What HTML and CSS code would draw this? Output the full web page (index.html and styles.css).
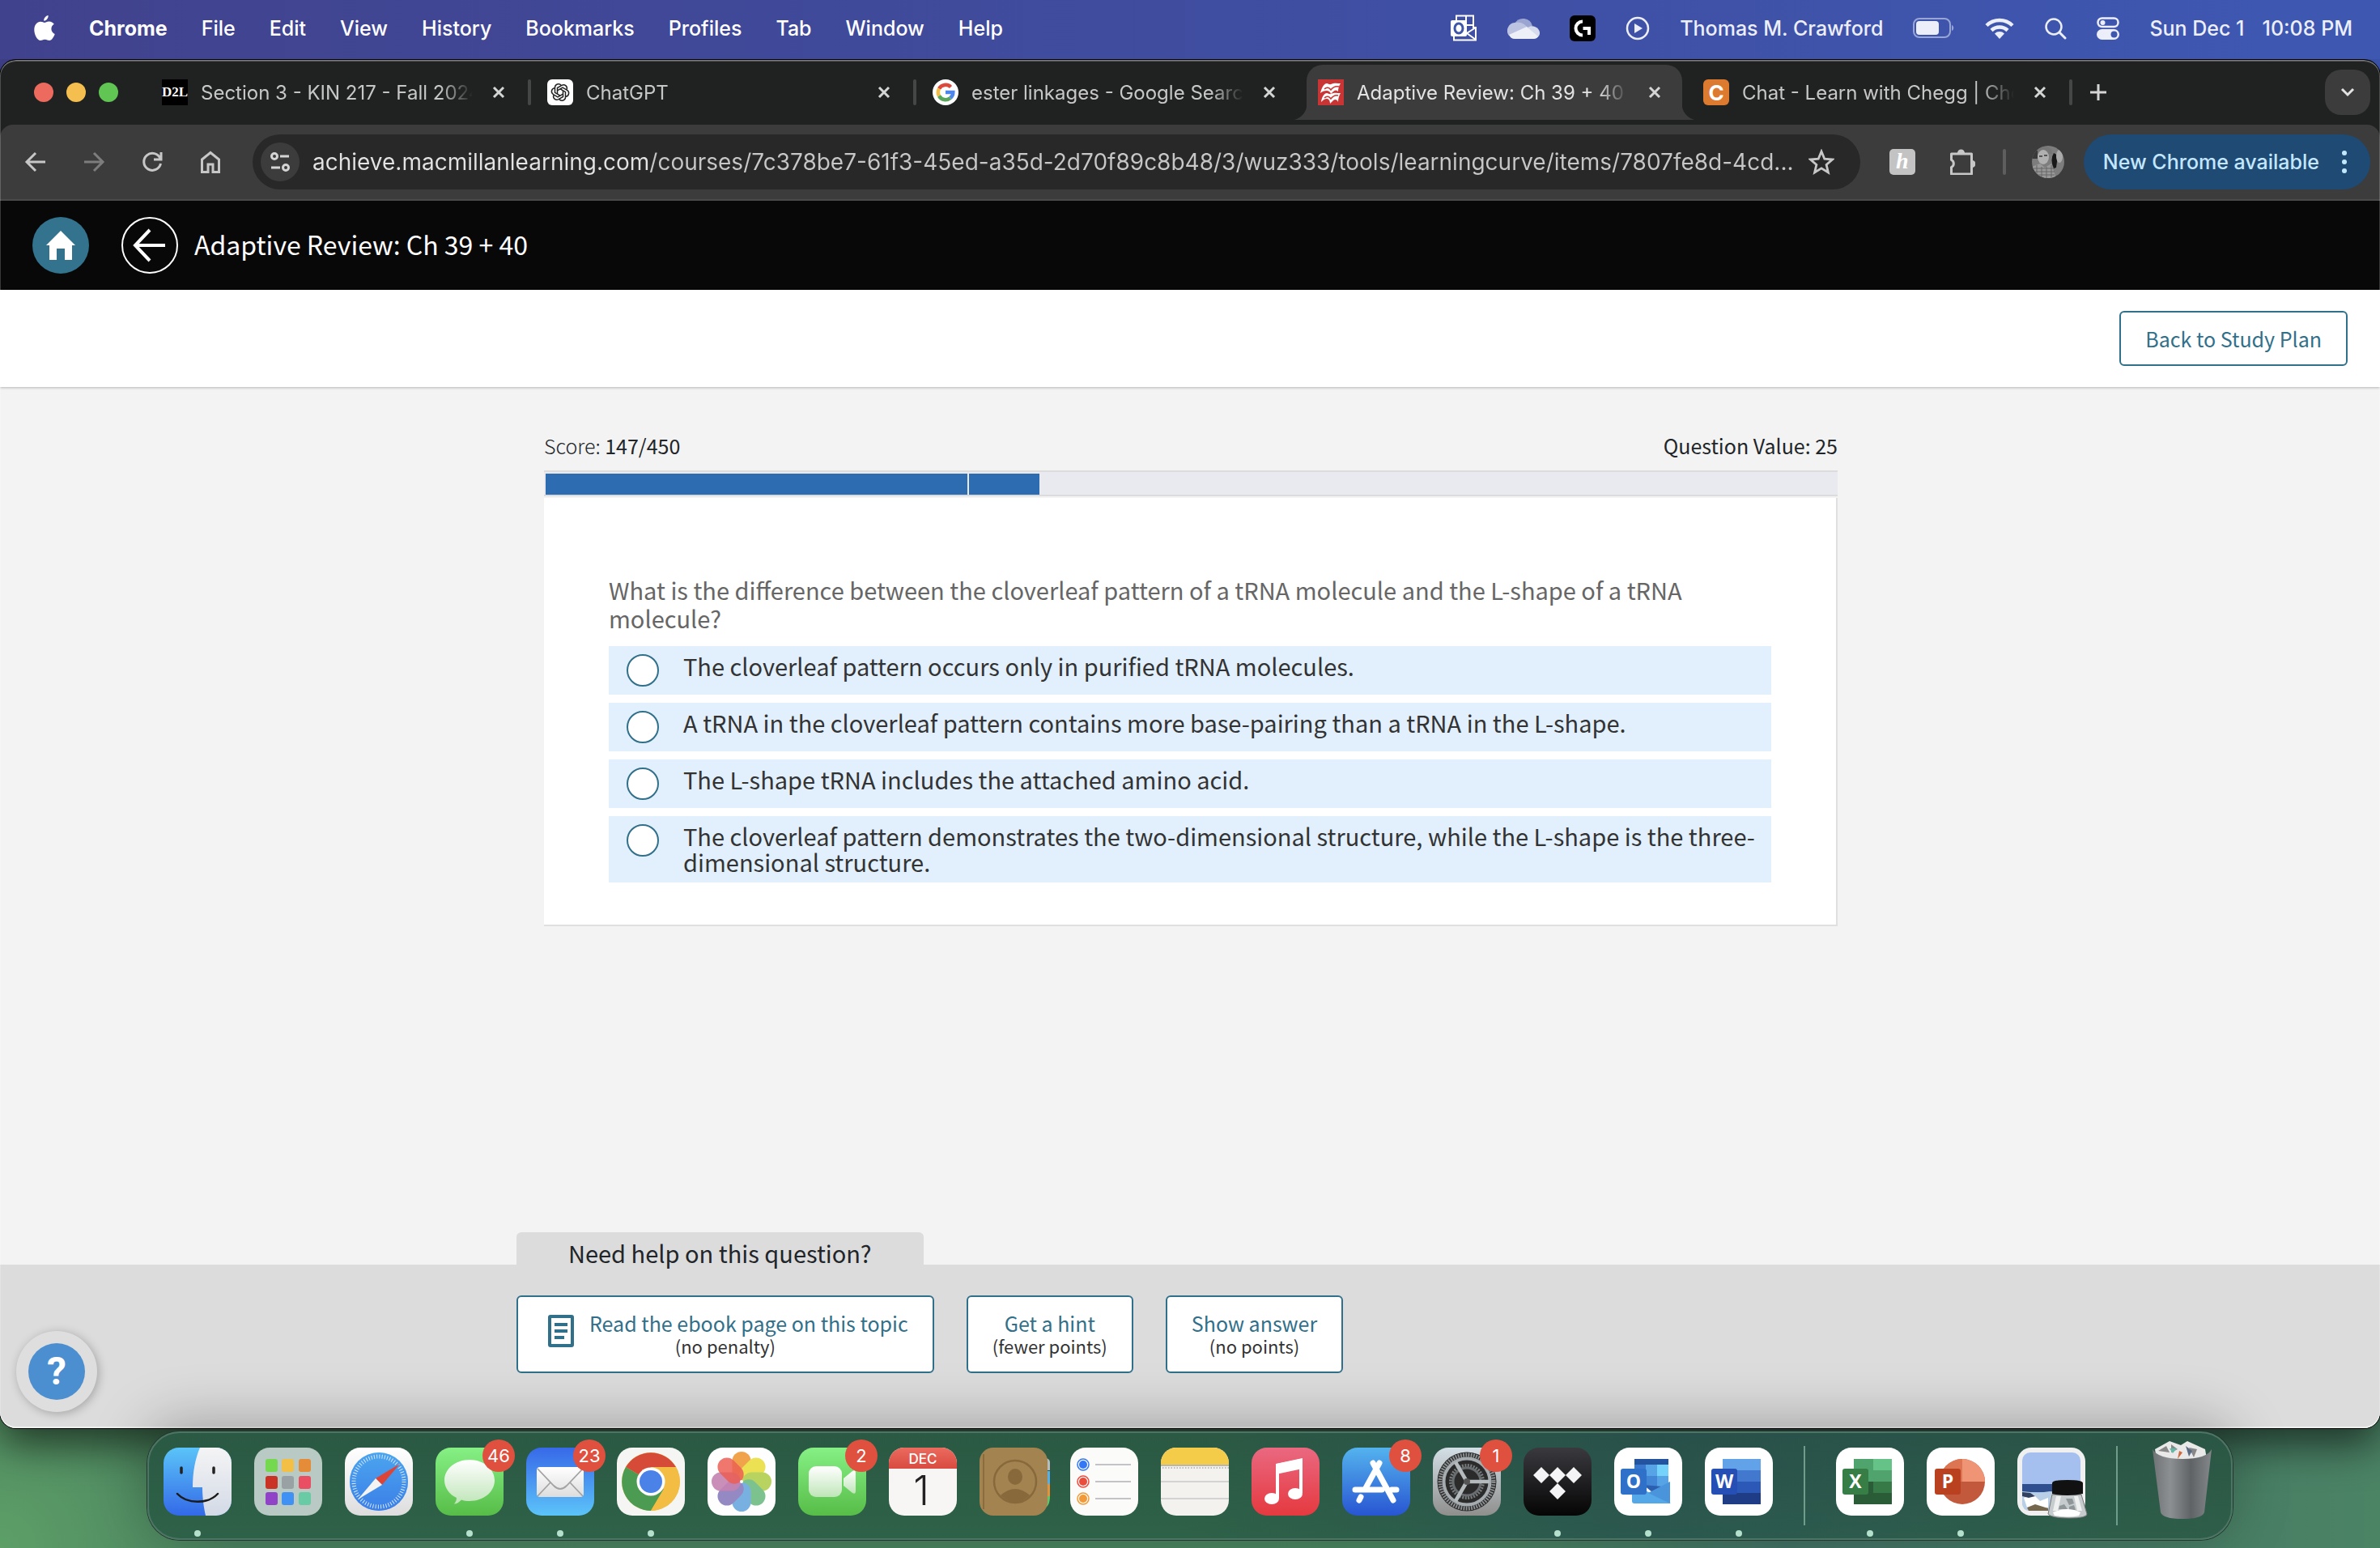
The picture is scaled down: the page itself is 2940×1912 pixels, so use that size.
FILE: index.html
```html
<!DOCTYPE html>
<html lang="en">
<head>
    <meta charset="UTF-8">
    <meta name="viewport" content="width=device-width, initial-scale=1.0">
    <title>Adaptive Review: Ch 39 + 40</title>
    <link rel="stylesheet" href="styles.css">
</head>
<body>
    <header class="menubar">
        <nav class="menus">
            <svg class="apple" width="26" height="32" viewBox="0 0 26 32"><path fill="#fff" d="M17.6 0c.3 3.400-2.200 6.600-5.400 6.800C11.800 3.600 14.600.500 17.600 0zM13 9c1.300 0 2.800-1.400 5.600-1.400 2.600 0 4.800 1.300 6.200 3.200-5 3-4.200 10 .900 12.200C24.500 26.600 22 31 19 31c-2.200 0-2.900-1.300-5.600-1.300S9.900 31 7.900 31C4.200 31 .300 23.800.300 18c0-6.500 3.900-10.200 7.700-10.200C10.300 7.800 11.800 9 13 9z"/></svg>
            <button class="app-name">Chrome</button>
            <button>File</button>
            <button>Edit</button>
            <button>View</button>
            <button>History</button>
            <button>Bookmarks</button>
            <button>Profiles</button>
            <button>Tab</button>
            <button>Window</button>
            <button>Help</button>
        </nav>
        <div class="status">
            <svg width="34" height="34" viewBox="0 0 34 34"><path d="M8 7V1.500h21V16h3v15.500H5V27" fill="none" stroke="#fff" stroke-width="2"/><path d="M20 2v11h9M32 16l-11 7 11 8" fill="none" stroke="#fff" stroke-width="2"/><rect x="1" y="7" width="20" height="20" rx="2" fill="#fff"/><ellipse cx="11" cy="17" rx="5" ry="6" fill="none" stroke="#3e55a8" stroke-width="3"/></svg>
            <svg width="40" height="26" viewBox="0 0 40 26"><path d="M9 7a12 12 0 0 1 22 3L20 16z" fill="#9aa5d1"/><path d="M9 6a10 10 0 0 0-7 16L25 12C22 8 16 4 9 6z" fill="#bcc4e2"/><path d="M25 12c8-5 16 2 15 8-1 4-4 5-6 5z" fill="#d5daed"/><path d="M2 21l22-10 14 12c-1 2-3 3-5 3H9c-3 0-6-2-7-5z" fill="#eef0f8"/></svg>
            <svg width="32" height="32" viewBox="0 0 32 32"><rect width="32" height="32" rx="6" fill="#000"/><path d="M16 7.500a8.500 8.500 0 0 0 0 17" fill="none" stroke="#fff" stroke-width="4"/><path d="M16.500 16H24v8" fill="none" stroke="#fff" stroke-width="4"/></svg>
            <svg width="30" height="30" viewBox="0 0 30 30"><circle cx="15" cy="15" r="13" fill="none" stroke="#eceffa" stroke-width="2.500"/><path d="M11 9l10 6-10 6z" fill="#eceffa"/></svg>
            <span class="user">Thomas M. Crawford</span>
            <svg width="52" height="26" viewBox="0 0 52 26"><rect x="1" y="1" width="45" height="23" rx="7" fill="none" stroke="#98a5d5" stroke-width="2"/><rect x="4" y="4" width="28" height="17" rx="4" fill="#eceffa"/><path d="M48 9c3 1 3 6 0 7z" fill="#98a5d5"/></svg>
            <svg width="36" height="26" viewBox="0 0 36 26"><g fill="none" stroke="#eceffa" stroke-width="4.500"><path d="M2 9.500a23 23 0 0 1 32 0"/><path d="M8 15.500a14.500 14.500 0 0 1 20 0"/></g><path d="M18 26l-6-6.500a8.500 8.500 0 0 1 12 0z" fill="#eceffa"/></svg>
            <svg width="28" height="28" viewBox="0 0 28 28"><circle cx="12" cy="12" r="9.500" fill="none" stroke="#eceffa" stroke-width="2.500"/><path d="M19 19l7 7" stroke="#eceffa" stroke-width="3" stroke-linecap="round"/></svg>
            <svg width="28" height="28" viewBox="0 0 28 28"><rect x="1.500" y="1.500" width="25" height="10.500" rx="5" fill="none" stroke="#eceffa" stroke-width="2.500"/><circle cx="7.500" cy="7" r="3" fill="#eceffa"/><rect y="15" width="28" height="13" rx="6.500" fill="#eceffa"/><circle cx="21.500" cy="21.500" r="4" fill="#3e57ae"/></svg>
            <span class="clock">Sun Dec 1<span>10:08 PM</span></span>
        </div>
    </header>

    <div class="window">
        <div class="tabstrip">
            <div class="lights"><i class="red"></i><i class="yellow"></i><i class="green"></i></div>
            <div class="tab">
                <span class="favicon d2l">D2L</span>
                <span class="tab-title">Section 3 - KIN 217 - Fall 2024</span>
                <button class="close" aria-label="Close tab"><svg width="16" height="16" viewBox="0 0 16 16"><path d="M2 2l12 12M14 2L2 14"/></svg></button>
            </div>
            <div class="tab">
                <span class="favicon gpt"><svg width="26" height="26" viewBox="0 0 26 26"><g fill="none" stroke="#222" stroke-width="1.500"><path id="petal" d="M9.500 15V7.500L15 4.300a4.300 4.300 0 0 1 6 5.500"/><use href="#petal" transform="rotate(60 13 13)"/><use href="#petal" transform="rotate(120 13 13)"/><use href="#petal" transform="rotate(180 13 13)"/><use href="#petal" transform="rotate(240 13 13)"/><use href="#petal" transform="rotate(300 13 13)"/></g></svg></span>
                <span class="tab-title">ChatGPT</span>
                <button class="close" aria-label="Close tab"><svg width="16" height="16" viewBox="0 0 16 16"><path d="M2 2l12 12M14 2L2 14"/></svg></button>
            </div>
            <div class="tab no-line">
                <span class="favicon"><svg width="32" height="32" viewBox="0 0 32 32"><circle cx="16" cy="16" r="16" fill="#fff"/><g fill="none" stroke-width="4.500"><path d="M22.500 9.500A9.300 9.300 0 0 0 8 11.500" stroke="#dc4a3d"/><path d="M8 11.500a9.300 9.300 0 0 0 0 9" stroke="#f2bd42"/><path d="M8 20.500a9.300 9.300 0 0 0 14 2.500" stroke="#58a55c"/><path d="M16 16h9.300a9.300 9.300 0 0 1-3.300 7" stroke="#4f86ec"/></g></svg></span>
                <span class="tab-title">ester linkages - Google Search</span>
                <button class="close" aria-label="Close tab"><svg width="16" height="16" viewBox="0 0 16 16"><path d="M2 2l12 12M14 2L2 14"/></svg></button>
            </div>
            <div class="tab active no-line">
                <span class="favicon"><svg width="32" height="32" viewBox="0 0 32 32"><path fill="#c93434" d="M0 0h32v32H0z"/><path id="wave" fill="#fff" d="M3 17C5 9 8 5 11 5c2 0 3 2 5 1 4-2 8-1 12-1-2 3-3 6-3 10-2-2-4-2-6 0l-3 3c-1-3-3-4-5-4-3 0-6 1-8 3z"/><path fill="#fff" d="M4 28c1-7 4-11 7-11 2 0 3 2 5 1 4-2 8-1 12-1-2 3-3 7-3 11-1-3-4-4-6-2l-4 4c0-4-2-6-4-6-3 0-5 2-7 4z"/><path d="M8 12c3-3 6-2 8 1 3-4 6-5 10-4M8 23c3-3 6-2 8 1 3-4 6-5 9-4" fill="none" stroke="#c93434" stroke-width="1.500"/></svg></span>
                <span class="tab-title">Adaptive Review: Ch 39 + 40</span>
                <button class="close" aria-label="Close tab"><svg width="16" height="16" viewBox="0 0 16 16"><path d="M2 2l12 12M14 2L2 14"/></svg></button>
            </div>
            <div class="tab">
                <span class="favicon chegg">C</span>
                <span class="tab-title">Chat - Learn with Chegg | Chegg</span>
                <button class="close" aria-label="Close tab"><svg width="16" height="16" viewBox="0 0 16 16"><path d="M2 2l12 12M14 2L2 14"/></svg></button>
            </div>
            <button class="new-tab" aria-label="New tab"><svg width="22" height="22" viewBox="0 0 22 22"><path d="M11 1v20M1 11h20"/></svg></button>
            <button class="tab-search" aria-label="Search tabs"><svg width="18" height="12" viewBox="0 0 18 12"><path d="M2 2l7 7 7-7" fill="none" stroke="#e3e3e3" stroke-width="3"/></svg></button>
        </div>

        <div class="toolbar">
            <div class="nav-buttons">
                <button aria-label="Back"><svg width="28" height="28" viewBox="0 0 28 28"><path d="M26 14H3M14 3L3 14l11 11"/></svg></button>
                <button class="off" aria-label="Forward"><svg width="28" height="28" viewBox="0 0 28 28"><path d="M2 14h23M14 3l11 11-11 11"/></svg></button>
                <button aria-label="Reload"><svg width="28" height="28" viewBox="0 0 28 28"><path d="M24 10A10.500 10.500 0 1 0 24.500 16M25 2v9h-9"/></svg></button>
                <button aria-label="Home"><svg width="28" height="28" viewBox="0 0 28 28"><path d="M3.500 11L14 2.500 24.500 11v15.500H17V17h-6v9.500H3.500z"/></svg></button>
            </div>
            <div class="omnibox">
                <button class="site-info" aria-label="Site information"><svg width="26" height="26" viewBox="0 0 26 26"><g fill="none" stroke="#d5d5d5" stroke-width="3"><circle cx="6" cy="6" r="3.500"/><path d="M13 6h11"/><circle cx="20" cy="20" r="3.500"/><path d="M2 20h11"/></g></svg></button>
                <input class="url" type="text" aria-label="Address" value="achieve.macmillanlearning.com/courses/7c378be7-61f3-45ed-a35d-2d70f89c8b48/3/wuz333/tools/learningcurve/items/7807fe8d-4cd...">
                <button class="star" aria-label="Bookmark"><svg width="32" height="32" viewBox="0 0 32 32"><path d="M16 3l3.800 9.200 9.700.800-7.400 6.400 2.300 9.600L16 23.800 7.600 29l2.300-9.600L2.500 13l9.700-.800z" fill="none" stroke="#c7c7c7" stroke-width="2.800"/></svg></button>
            </div>
            <div class="extensions">
                <span class="honey">h</span>
                <svg width="32" height="32" viewBox="0 0 32 32"><path d="M2.500 6h25v25h-25v-8.500a5 5 0 0 0 0-9z" fill="none" stroke="#c7c7c7" stroke-width="3" stroke-linejoin="round"/><path d="M10 5a4.500 4.500 0 0 1 9 0zM28 14a4.500 4.500 0 0 1 0 9z" fill="#c7c7c7"/></svg>
                <i class="divider"></i>
                <svg class="avatar" width="40" height="40" viewBox="0 0 40 40"><clipPath id="av"><circle cx="20" cy="20" r="20"/></clipPath><g clip-path="url(#av)"><path fill="#7d7d7d" d="M0 0h40v40H0z"/><path fill="#3a3a3a" d="M0 6h7v10H0z"/><path fill="#777" d="M8 4q8-6 16 0l1 6H7z"/><ellipse cx="14" cy="14" rx="7" ry="9" fill="#b0b0b0"/><path fill="#555" d="M9 12h4v2H9zM15 11h4v2h-4z"/><path fill="#999" d="M0 26l10-4 6 5 8-5 6 18H0z"/><path stroke="#666" stroke-width="1" d="M2 28h26M2 32h26M2 36h26M6 24v16M12 26v14M18 26v14M24 24v16"/><path fill="#191919" d="M27 9q-5 8 0 19l3-1 2-15z"/><ellipse cx="34" cy="13" rx="4" ry="8" fill="#aaa"/></g></svg>
                <button class="update">New Chrome available<svg width="8" height="28" viewBox="0 0 8 28"><g fill="#c3e7ff"><circle cx="4" cy="3" r="3"/><circle cx="4" cy="14" r="3"/><circle cx="4" cy="25" r="3"/></g></svg></button>
            </div>
        </div>

        <div class="page">
            <header class="course-bar">
                <a class="round home" href="#" aria-label="Home"><svg width="38" height="38" viewBox="0 0 38 38"><path fill="#fff" d="M19 1l18 18h-4v18h-9V23H14v14H5V19H1z"/></svg></a>
                <a class="round back" href="#" aria-label="Back"><svg width="44" height="44" viewBox="0 0 44 44"><path d="M41 22H4M22 3L4 22l18 19" fill="none" stroke="#fff" stroke-width="4"/></svg></a>
                <h1>Adaptive Review: Ch 39 + 40</h1>
            </header>
            <div class="plan-bar"><button class="btn">Back to Study Plan</button></div>

            <main class="quiz">
                <div class="score-row">
                    <p class="score">Score: <b>147/450</b></p>
                    <p>Question Value: 25</p>
                </div>
                <div class="progress" role="progressbar" aria-valuenow="147" aria-valuemax="450">
                    <div class="fill" style="width: 32.700%"></div>
                    <div class="fill" style="width: 5.450%"></div>
                </div>
                <form class="card">
                    <p class="question">What is the difference between the cloverleaf pattern of a tRNA molecule and the L-shape of a tRNA molecule?</p>
                    <label class="option"><input type="radio" name="answer"><span>The cloverleaf pattern occurs only in purified tRNA molecules.</span></label>
                    <label class="option"><input type="radio" name="answer"><span>A tRNA in the cloverleaf pattern contains more base-pairing than a tRNA in the L-shape.</span></label>
                    <label class="option"><input type="radio" name="answer"><span>The L-shape tRNA includes the attached amino acid.</span></label>
                    <label class="option"><input type="radio" name="answer"><span>The cloverleaf pattern demonstrates the two-dimensional structure, while the L-shape is the three-dimensional structure.</span></label>
                </form>
            </main>

            <footer class="help">
                <div class="help-inner"><h2>Need help on this question?</h2></div>
                <div class="help-bar">
                    <div class="help-inner help-buttons">
                        <button class="btn help-btn ebook">
                            <svg width="48" height="48" viewBox="0 0 48 48"><rect x="9" y="6" width="28" height="36" rx="1" fill="none" stroke="#31708a" stroke-width="4"/><path d="M15 16h16M15 24h16M15 32h12" stroke="#31708a" stroke-width="4"/></svg>
                            <span>Read the ebook page on this topic</span>
                            <small>(no penalty)</small>
                        </button>
                        <button class="btn help-btn"><span>Get a hint</span><small>(fewer points)</small></button>
                        <button class="btn help-btn"><span>Show answer</span><small>(no points)</small></button>
                    </div>
                </div>
            </footer>
            <button class="launcher" aria-label="Support"><span>?</span></button>
        </div>
    </div>

    <div class="dock">
        <svg width="0" height="0" class="defs">
            <defs>
                <linearGradient id="blue" x2="0" y2="1"><stop stop-color="#5bc4f8"/><stop offset="1" stop-color="#3369e8"/></linearGradient>
                <linearGradient id="mail" x2="0" y2="1"><stop stop-color="#3769e8"/><stop offset="1" stop-color="#5cc4f9"/></linearGradient>
                <linearGradient id="green" x2="0" y2="1"><stop stop-color="#86f085"/><stop offset="1" stop-color="#57bd48"/></linearGradient>
                <linearGradient id="white" x2="0" y2="1"><stop stop-color="#fff"/><stop offset="1" stop-color="#ddd"/></linearGradient>
                <linearGradient id="bubble" x2="0" y2="1"><stop stop-color="#fff"/><stop offset="1" stop-color="#bfe5b8"/></linearGradient>
                <linearGradient id="face" x2="0" y2="1"><stop stop-color="#f4f4f5"/><stop offset="1" stop-color="#d3dae6"/></linearGradient>
                <linearGradient id="pink" x2="0" y2="1"><stop stop-color="#ea6880"/><stop offset="1" stop-color="#e5393f"/></linearGradient>
                <linearGradient id="calred" x2="0" y2="1"><stop stop-color="#ec6a5e"/><stop offset="1" stop-color="#d84b40"/></linearGradient>
                <linearGradient id="black" x2="0" y2="1"><stop stop-color="#3a393e"/><stop offset="1" stop-color="#050505"/></linearGradient>
                <linearGradient id="steel" x2="0" y2="1"><stop stop-color="#d3dfe6"/><stop offset="1" stop-color="#8f8f8d"/></linearGradient>
                <linearGradient id="store" x2="0" y2="1"><stop stop-color="#54b3ee"/><stop offset="1" stop-color="#2855d2"/></linearGradient>
                <linearGradient id="can"><stop stop-color="#6f7375"/><stop offset=".3" stop-color="#8d9092"/><stop offset=".65" stop-color="#5f6365"/><stop offset="1" stop-color="#85888a"/></linearGradient>
                <clipPath id="app"><rect width="84" height="84" rx="19"/></clipPath>
            </defs>
        </svg>

        <div class="app running"><svg viewBox="0 0 84 84"><g clip-path="url(#app)"><path fill="url(#blue)" d="M0 0h84v84H0z"/><path fill="url(#face)" d="M45 0c-6 14-9 30-9 49h12c0 14 2 26 4 35h32V0z"/></g><path d="M22 25v6M62 25v6" stroke="#222" stroke-width="3.500" stroke-linecap="round"/><path d="M17 57c12 13 38 13 50 0" fill="none" stroke="#1b1b1b" stroke-width="2.500" stroke-linecap="round"/></svg></div>
        <div class="app"><svg viewBox="0 0 84 84"><rect width="84" height="84" rx="19" fill="#b9c9c3"/><g><rect x="14" y="14" width="15" height="16" rx="3" fill="#75d950"/><rect x="34" y="14" width="15" height="16" rx="3" fill="#f3bf44"/><rect x="55" y="14" width="15" height="16" rx="3" fill="#e58c38"/><rect x="14" y="35" width="15" height="16" rx="3" fill="#c93225"/><rect x="34" y="35" width="15" height="16" rx="3" fill="#9aa1a5"/><rect x="55" y="35" width="15" height="16" rx="3" fill="#e94e62"/><rect x="14" y="55" width="15" height="16" rx="3" fill="#9043c7"/><rect x="34" y="55" width="15" height="16" rx="3" fill="#3f92f3"/><rect x="55" y="55" width="15" height="16" rx="3" fill="#69cba5"/></g></svg></div>
        <div class="app"><svg viewBox="0 0 84 84"><rect width="84" height="84" rx="19" fill="url(#white)"/><circle cx="42" cy="42" r="36" fill="url(#blue)"/><circle cx="42" cy="42" r="36" fill="#4190e8" opacity=".6"/><circle cx="42" cy="42" r="31" fill="none" stroke="#d5e8fb" stroke-width="5" stroke-dasharray="1 2.250"/><path fill="#dd4438" d="M68 20L38 38l8 8z"/><path fill="#f3f3f3" d="M16 64l22-26 8 8z"/></svg></div>
        <div class="app running"><svg viewBox="0 0 84 84"><rect width="84" height="84" rx="19" fill="url(#green)"/><path fill="url(#bubble)" d="M42 15c17 0 31 11 31 25.500S59 66 42 66c-4 0-7-.500-10-1.500-3 3-6 5-9 5 2-2 3-5 3-7.500C17 58 11 49 11 40.500 11 26 25 15 42 15z"/></svg><span class="badge">46</span></div>
        <div class="app running"><svg viewBox="0 0 84 84"><rect width="84" height="84" rx="19" fill="url(#mail)"/><rect x="13" y="24" width="58" height="37" rx="4" fill="url(#white)"/><path d="M14 26l20 21q8 8 16 0l20-21M14 60l16-17M70 60L54 43" fill="none" stroke="#a3a3a3" stroke-width="1.800"/></svg><span class="badge">23</span></div>
        <div class="app running"><svg viewBox="0 0 84 84"><rect width="84" height="84" rx="19" fill="#f5f5f3"/><circle cx="42" cy="42" r="36" fill="#f2bd42"/><path fill="#d64b38" d="M42 42L11 24a36 36 0 0 1 62 0z"/><path fill="#4b9b52" d="M11 24a36 36 0 0 0 31 54l16-27-16-9z"/><path fill="#f2bd42" d="M42 24h31a36 36 0 0 1-31 54l16-27z"/><circle cx="42" cy="42" r="17.500" fill="#fff"/><circle cx="42" cy="42" r="14" fill="#4a82e8"/></svg></div>
        <div class="app"><svg viewBox="0 0 84 84"><rect width="84" height="84" rx="19" fill="#fefefe"/><g opacity=".9"><rect x="30.500" y="5" width="23" height="36" rx="11.500" fill="#f09a38"/><rect x="30.500" y="5" width="23" height="36" rx="11.500" fill="#e9de40" transform="rotate(45 42 42)"/><rect x="30.500" y="5" width="23" height="36" rx="11.500" fill="#b2cf50" transform="rotate(90 42 42)"/><rect x="30.500" y="5" width="23" height="36" rx="11.500" fill="#6fbc82" transform="rotate(135 42 42)"/><rect x="30.500" y="5" width="23" height="36" rx="11.500" fill="#6aa9de" transform="rotate(180 42 42)"/><rect x="30.500" y="5" width="23" height="36" rx="11.500" fill="#8a7dbd" transform="rotate(225 42 42)"/><rect x="30.500" y="5" width="23" height="36" rx="11.500" fill="#bf75a8" opacity=".9" transform="rotate(270 42 42)"/><rect x="30.500" y="5" width="23" height="36" rx="11.500" fill="#ea4e42" opacity=".85" transform="rotate(315 42 42)"/></g><circle cx="42" cy="42" r="2" fill="#fff"/></svg></div>
        <div class="app"><svg viewBox="0 0 84 84"><rect width="84" height="84" rx="19" fill="url(#green)"/><rect x="13" y="23" width="41" height="38" rx="9" fill="url(#bubble)"/><path fill="url(#bubble)" d="M56 38l11-9q4-2 4 2v23q0 4-4 2l-11-9z"/></svg><span class="badge">2</span></div>
        <div class="app"><svg viewBox="0 0 84 84"><g clip-path="url(#app)"><path fill="#f7f6f5" d="M0 0h84v84H0z"/><path fill="url(#calred)" d="M0 0h84v26H0z"/></g><text x="42" y="20" class="cal-month">DEC</text><text x="40" y="71" class="cal-day">1</text></svg></div>
        <div class="app"><svg viewBox="0 0 84 84"><path fill="#b9bcbc" d="M78 12q9 1 9 6v10h-9z"/><path fill="#5aaee6" d="M78 29h9v16h-9z"/><path fill="#e5923c" d="M78 45h9v15h-9z"/><path fill="#68c46a" d="M78 60h9q0 14-9 15z"/><rect width="84" height="84" rx="17" fill="#a3834f"/><path d="M5 8v68" stroke="#8a6c3d" stroke-width="2"/><circle cx="44" cy="42" r="26" fill="none" stroke="#87693c" stroke-width="2.500"/><ellipse cx="44" cy="36" rx="9" ry="10" fill="#87693c"/><path fill="#87693c" d="M26 59q18-16 36 0-18 17-36 0z"/></svg></div>
        <div class="app"><svg viewBox="0 0 84 84"><rect width="84" height="84" rx="19" fill="#fbfbfa"/><g stroke-width="1.500" fill="none"><circle cx="16" cy="21" r="7" stroke="#3478f6"/><circle cx="16" cy="42" r="7" stroke="#eb4d3d"/><circle cx="16" cy="63" r="7" stroke="#f19a37"/></g><circle cx="16" cy="21" r="5" fill="#3478f6"/><circle cx="16" cy="42" r="5" fill="#eb4d3d"/><circle cx="16" cy="63" r="5" fill="#f19a37"/><path d="M31 21h44M31 42h44M31 63h44" stroke="#c3c3c7" stroke-width="2"/></svg></div>
        <div class="app"><svg viewBox="0 0 84 84"><g clip-path="url(#app)"><path fill="#f3f2ee" d="M0 0h84v84H0z"/><path fill="#f5cb4a" d="M0 0h84v21H0z"/><path d="M0 22h84" stroke="#a5a39b" stroke-width="1.500"/><path d="M2 25h82" stroke="#bbb" stroke-width="2" stroke-dasharray="1.500 2"/><path d="M0 42h84M0 63h84" stroke="#d3d3d3" stroke-width="2"/></g></svg></div>
        <div class="app"><svg viewBox="0 0 84 84"><rect width="84" height="84" rx="19" fill="url(#pink)"/><path d="M32 63V22l29-6v40" fill="none" stroke="#fff" stroke-width="4"/><path fill="#fff" d="M30 20l33-7v13l-33 7z"/><ellipse cx="25" cy="63" rx="9" ry="7" fill="#fff"/><ellipse cx="54" cy="57" rx="9" ry="7" fill="#fff"/></svg></div>
        <div class="app"><svg viewBox="0 0 84 84"><rect width="84" height="84" rx="19" fill="url(#store)"/><g stroke="#fff" stroke-width="7" stroke-linecap="round"><path d="M46 19L29 50M38 19l25 46M16 52h33M61 52h6M23 61l-2 4"/></g></svg><span class="badge">8</span></div>
        <div class="app"><svg viewBox="0 0 84 84"><rect width="84" height="84" rx="19" fill="url(#steel)"/><circle cx="42" cy="42" r="36.500" fill="#2b2b2b"/><g fill="none"><circle cx="42" cy="42" r="33" stroke="#8d9194" stroke-width="5" stroke-dasharray="1.800 1.400"/><circle cx="42" cy="42" r="28.500" stroke="#a5abae" stroke-width="4"/><circle cx="42" cy="42" r="20" stroke="#777b7d" stroke-width="4" stroke-dasharray="2 1.500"/><circle cx="42" cy="42" r="17" stroke="#6a6d6f" stroke-width="3"/><path d="M42 42h28M42 42L28 18M42 42L28 66" stroke="#b5babd" stroke-width="4.500"/></g><circle cx="42" cy="42" r="4" fill="#555"/></svg><span class="badge">1</span></div>
        <div class="app running"><svg viewBox="0 0 84 84"><rect width="84" height="84" rx="19" fill="url(#black)"/><path fill="#f4f4f6" d="M22 24l10 10-10 10-10-10zM42 24l10 10-10 10-10-10zM62 24l10 10-10 10-10-10zM42 44l10 10-10 10-10-10z"/></svg></div>
        <div class="app running"><svg viewBox="0 0 84 84"><rect width="84" height="84" rx="19" fill="#fff"/><path fill="#24549f" d="M25 14h42v10H25z"/><path fill="#3a78d0" d="M25 21h14v28H25z"/><path fill="#56a4e6" d="M39 21h14v14H39zM53 35h14v14H53z"/><path fill="#75d3fb" d="M53 21h14v14H53z"/><path fill="#4187d6" d="M39 35h14v14H39z"/><path fill="#2b5fb0" d="M36 46l11 9 12-7z"/><path fill="#55a8e8" d="M22 45h1l47 24H25q-3 0-3-3z"/><path fill="#4a94dc" d="M69 42v27L42 56z"/><rect x="8" y="26" width="32" height="32" rx="3" fill="#2f70c9"/><text x="24" y="50" class="letter">O</text></svg></div>
        <div class="app running"><svg viewBox="0 0 84 84"><rect width="84" height="84" rx="19" fill="#fff"/><path fill="#61a2e8" d="M22 14h47v14H22z"/><path fill="#4378cf" d="M22 28h47v14H22z"/><path fill="#2c59b8" d="M22 42h47v14H22z"/><path fill="#1f3d87" d="M22 56h47v14H22z"/><rect x="8" y="26" width="32" height="32" rx="3" fill="#254fb5"/><text x="24" y="50" class="letter">W</text></svg></div>
        <i class="dock-line"></i>
        <div class="app running"><svg viewBox="0 0 84 84"><rect width="84" height="84" rx="19" fill="#fff"/><path fill="#4fa36c" d="M22 14h24v28H22z"/><path fill="#65c388" d="M46 14h23v14H46z"/><path fill="#50a36d" d="M46 28h23v14H46z"/><path fill="#2b5c38" d="M22 42h47v28H22z"/><path fill="#377a48" d="M46 42h23v14H46z"/><rect x="8" y="26" width="32" height="32" rx="3" fill="#377e46"/><text x="24" y="50" class="letter">X</text></svg></div>
        <div class="app running"><svg viewBox="0 0 84 84"><rect width="84" height="84" rx="19" fill="#fff"/><circle cx="44" cy="42" r="28" fill="#c2593c"/><path fill="#de7552" d="M16 42a28 28 0 0 1 28-28v28z"/><path fill="#ef9475" d="M44 14a28 28 0 0 1 28 28H44z"/><rect x="10" y="26" width="32" height="32" rx="3" fill="#b9411f"/><text x="26" y="50" class="letter">P</text></svg></div>
        <div class="app"><svg viewBox="0 0 84 84"><rect width="84" height="84" rx="17" fill="#f0f0f0"/><rect x="6" y="6" width="72" height="72" rx="10" fill="#a5c0ee"/><path fill="#2f4f8f" d="M6 45h72v10H6z"/><path fill="#b9cfe6" d="M6 54l20 2 14-2 38 4v10q0 10-10 10H16Q6 78 6 68z"/><path fill="#fff" d="M8 62l12-4 8 8 10-4v12H12z"/><path fill="#75664e" d="M12 74l10-4 16 5v3H14z"/><path fill="#33415f" d="M6 55l10 1 6 4-8 2-8-2z"/><path fill="#c6cbcd" stroke="#777" d="M43 58h36l7 24q0 5-22 5t-26-5z"/><path fill="#eef0f0" d="M48 60h6l-4 18h-6zM70 60h5l5 18h-6z"/><path fill="#8e9698" d="M60 63h8l2 6-6 2zM52 72l6-2 4 6H51zM64 73l6-2 2 6h-8z"/><path fill="#fff" d="M44 80q18-8 34 0l-2 4q-14 3-30 0z"/><path fill="#111" d="M43 44q0-4 19-4t19 4v13q-19 4-38 0z"/></svg></div>
        <i class="dock-line"></i>
        <div class="app"><svg viewBox="0 0 84 84"><path fill="#e9e9e9" d="M8 2l18-10 14 5 8-5 22 10 2 12H10z"/><path fill="#888" d="M12 4l10-6 4 8zM50 0l10 2-4 10zM28-4l8 6-8 4z"/><path fill="#5b6a84" d="M46-2l8 6-4 7z"/><path fill="#63b9a8" d="M26 1l9 0-5 6z"/><path fill="#d0693e" d="M38 4l4 2-6 8z"/><path fill="url(#can)" d="M5 2q7 12 37 12T78 2l-9 78q-3 8-27 8t-27-8z"/></svg></div>
    </div>
</body>
</html>
```
FILE: styles.css
```css
* {
    box-sizing: border-box;
}

body {
    margin: 0;
    min-height: 100vh;
    display: flex;
    flex-direction: column;
    font-family: Inter, "Liberation Sans", sans-serif;
    background:
        linear-gradient(90deg, #41428d, #3e58b2) top / 100% 200px no-repeat,
        radial-gradient(circle at 0 100%, #5d9f67, rgba(93, 159, 103, 0) 300px),
        linear-gradient(90deg, #4a8160, #4a855f 60%, #417164 75%, #4b8365);
}

button {
    margin: 0;
    padding: 0;
    border: none;
    background: none;
    color: inherit;
    font: inherit;
    cursor: pointer;
}

svg {
    display: block;
    flex: none;
}

p, h1, h2 {
    margin: 0;
    font-weight: 400;
}

/* menu bar */
.menubar {
    position: relative;
    z-index: 2;
    height: 73px;
    padding: 0 34px 3px 42px;
    display: flex;
    justify-content: space-between;
    align-items: center;
    color: #fff;
    font-size: 25px;
    font-weight: 500;
    background: linear-gradient(90deg, #41428d, #3e58b2);
}

.menus {
    display: flex;
    align-items: center;
    gap: 42px;
}

.app-name {
    font-weight: 700;
}

.status {
    display: flex;
    align-items: center;
    gap: 37px;
    color: #eceffa;
}

.clock {
    display: flex;
    gap: 22px;
    white-space: nowrap;
}

/* browser window */
.window {
    position: relative;
    flex: 1;
    margin-top: 1px;
    display: flex;
    flex-direction: column;
    border-radius: 20px;
    overflow: hidden;
    background: #202221;
    box-shadow: 0 0 0 1px #000, 0 20px 50px rgba(0, 0, 0, 0.6);
}

.window::after {
    content: "";
    position: absolute;
    inset: 0;
    border-radius: 20px;
    box-shadow: inset 0 0 0 1px rgba(255, 255, 255, 0.2), inset 0 2px rgba(255, 255, 255, 0.25), inset 0 -2px rgba(255, 255, 255, 0.5);
    pointer-events: none;
}

.tabstrip {
    height: 80px;
    display: flex;
    align-items: center;
    padding: 0 12px 0 42px;
}

.lights {
    display: flex;
    gap: 16px;
    width: 138px;
}

.lights i {
    width: 24px;
    height: 24px;
    border-radius: 50%;
}

.red { background: #ed6a5e; }
.yellow { background: #f4bf4f; }
.green { background: #61c554; }

.tab {
    position: relative;
    flex: 0 1 476px;
    min-width: 0;
    height: 68px;
    padding: 0 32px 0 20px;
    display: flex;
    align-items: center;
    gap: 16px;
    color: #c7c7c7;
    font-size: 24px;
}

.tab::after {
    content: "";
    position: absolute;
    right: 0;
    width: 4px;
    height: 32px;
    border-radius: 2px;
    background: #454746;
}

.no-line::after {
    display: none;
}

.favicon {
    flex: none;
    width: 32px;
    height: 32px;
    display: flex;
    align-items: center;
    justify-content: center;
}

.d2l {
    background: #000;
    color: #fff;
    font: bold 17px/32px "Liberation Serif", serif;
}

.gpt {
    background: #fff;
    border-radius: 6px;
}

.chegg {
    background: #dc7a30;
    border-radius: 6px;
    color: #fff;
    font-size: 26px;
    font-weight: 700;
}

.tab-title {
    flex: 1;
    overflow: hidden;
    white-space: nowrap;
    -webkit-mask-image: linear-gradient(90deg, #000 calc(100% - 40px), transparent);
    mask-image: linear-gradient(90deg, #000 calc(100% - 40px), transparent);
}

.close {
    margin-left: 8px;
}

.close path,
.new-tab path {
    stroke: #d5d5d5;
    stroke-width: 3;
}

.active {
    color: #e3e3e3;
}

/* the pill of the selected tab, with its flared feet */
.active::before {
    content: "";
    position: absolute;
    z-index: 0;
    inset: 0 6px;
    border-radius: 20px 20px 0 0;
    background: #3c3c3c;
}

.active::after {
    display: block;
    left: -14px;
    right: -14px;
    bottom: 0;
    width: auto;
    height: 20px;
    border-radius: 0;
    background:
        radial-gradient(circle at 0 0, transparent 20px, #3c3c3c 21px) left / 20px 20px no-repeat,
        radial-gradient(circle at 100% 0, transparent 20px, #3c3c3c 21px) right / 20px 20px no-repeat;
}

.active > * {
    position: relative;
    z-index: 1;
}

.new-tab {
    margin-left: 21px;
}

.tab-search {
    width: 56px;
    height: 56px;
    margin-left: auto;
    border-radius: 20px;
    background: #3c3c3c;
    display: flex;
    align-items: center;
    justify-content: center;
}

.toolbar {
    height: 94px;
    padding: 0 12px 0 30px;
    display: flex;
    align-items: center;
    background: #3c3c3c;
    border-bottom: 2px solid #4a4a4a;
    border-radius: 16px 16px 0 0;
}

.nav-buttons {
    display: flex;
    gap: 44px;
    margin-right: 38px;
}

.nav-buttons path {
    fill: none;
    stroke: #c7c7c7;
    stroke-width: 3;
}

.nav-buttons .off path {
    stroke: #7d7d7d;
}

.omnibox {
    flex: 1;
    height: 68px;
    padding: 0 32px 0 10px;
    display: flex;
    align-items: center;
    border-radius: 34px;
    background: #282828;
}

.site-info {
    flex: none;
    width: 48px;
    height: 48px;
    border-radius: 50%;
    background: #3c3c3c;
    display: flex;
    align-items: center;
    justify-content: center;
}

.url {
    flex: 1;
    min-width: 0;
    margin: 0 16px;
    padding: 0;
    border: none;
    outline: none;
    font: 28px/40px Inter, "Liberation Sans", sans-serif;
    color: transparent;
    background: linear-gradient(90deg, #e3e3e3 416px, #c7c7c7 416px);
    -webkit-background-clip: text;
    background-clip: text;
}

.extensions {
    display: flex;
    align-items: center;
    margin-left: 36px;
}

.honey {
    width: 32px;
    height: 32px;
    margin-right: 42px;
    border-radius: 5px;
    background: #c3c3c3;
    color: #fff;
    font: italic bold 28px/30px "Liberation Serif", serif;
    text-align: center;
}

.divider {
    width: 4px;
    height: 32px;
    margin: 0 32px 0 34px;
    border-radius: 2px;
    background: #5e5e5e;
}

.update {
    height: 68px;
    margin-left: 24px;
    padding: 0 28px 0 24px;
    display: flex;
    align-items: center;
    gap: 27px;
    border-radius: 34px;
    background: #1f4a73;
    color: #c3e7ff;
    font-size: 25px;
    font-weight: 500;
    white-space: nowrap;
}

/* course page */
.page {
    position: relative;
    flex: 1;
    display: flex;
    flex-direction: column;
    background: #f3f3f3;
    color: #212529;
    font-family: "Noto Sans CJK SC", "Open Sans", sans-serif;
}

.course-bar {
    height: 110px;
    padding: 0 40px;
    display: flex;
    align-items: center;
    background: #080808;
    color: #fff;
}

.course-bar h1 {
    padding-bottom: 4px;
    font-size: 32px;
    line-height: 40px;
}

.round {
    width: 70px;
    height: 70px;
    border-radius: 50%;
    display: flex;
    align-items: center;
    justify-content: center;
}

.home {
    margin-right: 40px;
    background: #33738d;
}

.back {
    margin-right: 20px;
    border: 2px solid #fff;
}

.plan-bar {
    height: 120px;
    padding: 0 40px;
    display: flex;
    align-items: center;
    justify-content: flex-end;
    background: #fff;
    box-shadow: 0 1px 3px rgba(0, 0, 0, 0.25);
}

.btn {
    height: 68px;
    padding: 0 30px;
    border: 2px solid #31708a;
    border-radius: 6px;
    background: #fff;
    color: #31708a;
    font-size: 25px;
    line-height: 36px;
    white-space: nowrap;
}

.quiz {
    flex: 1;
    width: 1600px;
    max-width: 100%;
    margin: 0 auto;
    padding: 54px 0 0 2px;
}

.score-row {
    display: flex;
    justify-content: space-between;
    margin-bottom: 13px;
    font-size: 25px;
    line-height: 36px;
}

.score {
    font-weight: 300;
}

.score b {
    font-weight: 400;
}

.progress {
    height: 32px;
    margin-bottom: 2px;
    padding: 2px 2px 0;
    display: flex;
    gap: 2px;
    border: solid #dcdcdc;
    border-width: 2px 0;
    background: #e9eaef;
}

.fill {
    background: #2d6cb1;
}

.card {
    padding: 96px 80px 52px;
    background: #fff;
    border: solid #e0e0e0;
    border-width: 0 2px 2px 0;
}

.question {
    margin-bottom: 17px;
    color: #666;
    font-size: 29px;
    line-height: 35px;
}

.option {
    min-height: 60px;
    margin-bottom: 10px;
    padding: 8px 12px 10px 22px;
    display: flex;
    align-items: flex-start;
    gap: 30px;
    background: #e2f0fe;
    color: #333;
    font-size: 29px;
    line-height: 32px;
}

.option:last-child {
    margin-bottom: 0;
}

.option input {
    appearance: none;
    flex: none;
    width: 40px;
    height: 40px;
    margin: 2px 0 0;
    border: 2px solid #31708a;
    border-radius: 50%;
    background: #fff;
}

.help-inner {
    width: 1664px;
    max-width: 100%;
    margin: 0 auto;
}

.help h2 {
    display: inline-block;
    height: 40px;
    padding: 5px 64px 0;
    border-radius: 6px 6px 0 0;
    background: #dcdcdc;
    font-size: 29px;
    line-height: 40px;
    vertical-align: top;
}

.help-bar {
    height: 202px;
    padding-top: 38px;
    background: #dcdcdc;
}

.help-buttons {
    display: flex;
    gap: 40px;
}

.help-btn {
    height: 96px;
    display: grid;
    align-content: center;
    justify-items: center;
    line-height: 28px;
}

.help-btn small {
    color: #333;
    font-size: 22px;
}

.ebook {
    grid-template-columns: 48px auto;
    column-gap: 10px;
}

.ebook svg {
    grid-row: 1 / 3;
    grid-column: 1;
    align-self: start;
}

.ebook small {
    grid-row: 2;
    grid-column: 1 / 3;
}

/* floating support button */
.launcher {
    position: absolute;
    left: 20px;
    bottom: 20px;
    width: 100px;
    height: 100px;
    display: flex;
    align-items: center;
    justify-content: center;
    border-radius: 50%;
    background: #dedede;
    box-shadow: 2px 2px 12px rgba(0, 0, 0, 0.25);
}

.launcher span {
    width: 70px;
    height: 70px;
    border-radius: 50%;
    background: #4b8fd0;
    color: #fff;
    font: bold 48px/70px Roboto, sans-serif;
}

/* dock */
.dock {
    position: relative;
    z-index: 1;
    align-self: center;
    height: 134px;
    margin: 4px 0 10px;
    padding: 18px 18px 0;
    display: flex;
    gap: 28px;
    border: 2px solid #4d7566;
    border-radius: 40px;
    background: linear-gradient(100deg, rgba(44, 95, 70, 0.6) 50%, rgba(40, 80, 82, 0.6) 72%, rgba(44, 90, 72, 0.6)), linear-gradient(#29503f, #31654a);
    box-shadow: 0 0 0 1px #24382f, 0 -10px 70px rgba(0, 0, 0, 0.28);
}

.defs {
    position: absolute;
}

.app {
    position: relative;
    width: 84px;
    height: 84px;
}

.app svg {
    width: 84px;
    height: 84px;
    overflow: visible;
}

.running::after {
    content: "";
    position: absolute;
    left: 38px;
    bottom: -26px;
    width: 8px;
    height: 8px;
    border-radius: 50%;
    background: #b5e0cd;
}

.badge {
    position: absolute;
    top: -10px;
    right: -14px;
    width: 40px;
    height: 40px;
    border-radius: 50%;
    background: #e0503f;
    color: #fff;
    font-size: 22px;
    line-height: 40px;
    text-align: center;
}

.dock-line {
    width: 2px;
    height: 98px;
    margin: -2px 10px 0;
    background: #6f9c8b;
}

.cal-month {
    fill: #fff;
    font-size: 17px;
    font-weight: 500;
    text-anchor: middle;
}

.cal-day {
    fill: #222;
    font-size: 50px;
    font-weight: 300;
    text-anchor: middle;
}

.letter {
    fill: #fff;
    font: bold 23px "Open Sans", sans-serif;
    text-anchor: middle;
}
```
